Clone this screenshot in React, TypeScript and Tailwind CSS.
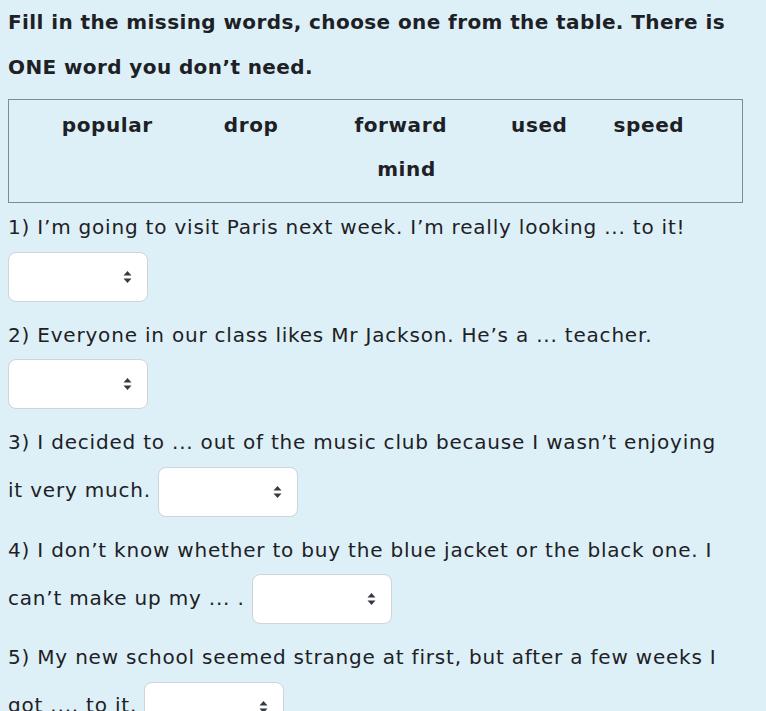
import { ReactNode } from 'react';

const WORDS_ROW_ONE = [
  { word: 'popular', gap: 'mr-[71px]' },
  { word: 'drop', gap: 'mr-[76px]' },
  { word: 'forward', gap: 'mr-[64px]' },
  { word: 'used', gap: 'mr-[46px]' },
  { word: 'speed', gap: '' },
];

function Blank() {
  return (
    <span className="relative inline-block h-[50px] w-[140px] align-middle">
      <select
        defaultValue=""
        className="h-full w-full appearance-none rounded-lg border border-[#ced4da] bg-white px-3 text-[20px] outline-none"
      >
        <option value=""></option>
        <option>popular</option>
        <option>drop</option>
        <option>forward</option>
        <option>used</option>
        <option>speed</option>
        <option>mind</option>
      </select>
      <svg
        className="pointer-events-none absolute right-[16px] top-1/2 -translate-y-1/2"
        width="9"
        height="13"
        viewBox="0 0 9 13"
      >
        <path d="M4.5 0.5 L8.5 5 H0.5 Z" fill="#343a40" />
        <path d="M4.5 12.5 L8.5 8 H0.5 Z" fill="#343a40" />
      </svg>
    </span>
  );
}

function Question({ children }: { children: ReactNode }) {
  return <p className="mb-[9px] w-[728px] leading-[48px] tracking-[0.8px]">{children}</p>;
}

export default function App() {
  return (
    <div className="min-h-screen bg-[#ddf0f7] px-2 font-['DejaVu_Sans',sans-serif] text-[20px] text-[#1d2125]">
      <div className="w-[735px]">
        <p className="mb-[9px] text-[20px] font-bold leading-[45px] tracking-[0.4px]">
          Fill in the missing words, choose one from the table. There is ONE word you don’t need.
        </p>

        <div className="border border-[#7f8b93] pb-[11px] pt-[3px] font-bold leading-[44px] tracking-[0.6px]">
          <div className="flex justify-center pr-[5px]">
            {WORDS_ROW_ONE.map((w) => (
              <span key={w.word} className={w.gap}>
                {w.word}
              </span>
            ))}
          </div>
          <div className="flex justify-center pl-[62px]">
            <span>mind</span>
          </div>
        </div>

        <Question>
          1) I’m going to visit Paris next week. I’m really looking ... to it! <Blank />
        </Question>
        <Question>
          2) Everyone in our class likes Mr Jackson. He’s a ... teacher. <Blank />
        </Question>
        <Question>
          3) I decided to ... out of the music club because I wasn’t enjoying it very much. <Blank />
        </Question>
        <Question>
          4) I don’t know whether to buy the blue jacket or the black one. I can’t make up my ... . <Blank />
        </Question>
        <Question>
          5) My new school seemed strange at first, but after a few weeks I got .... to it. <Blank />
        </Question>
      </div>
    </div>
  );
}
